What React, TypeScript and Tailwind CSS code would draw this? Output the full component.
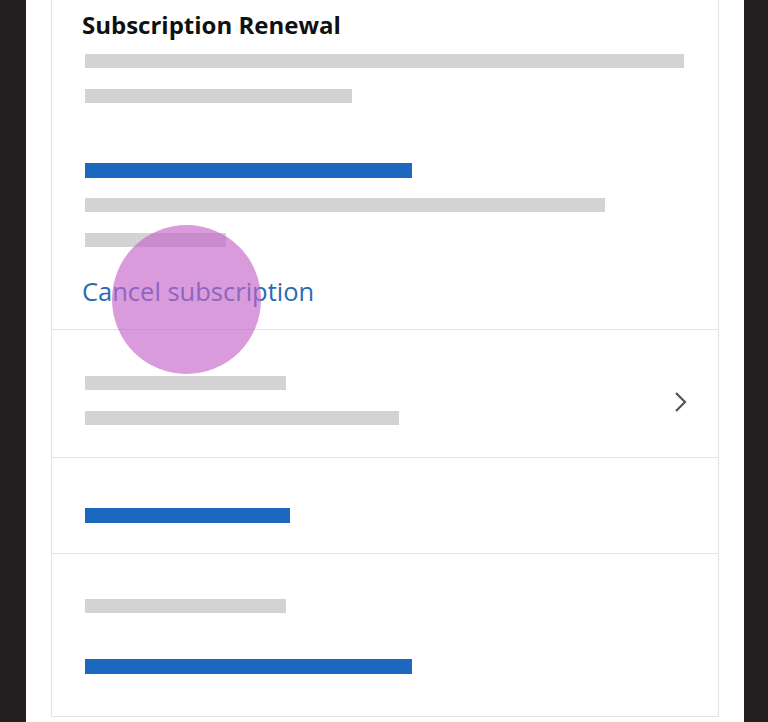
import React from 'react'

const Bar = ({ w, blue = false, className = '' }: { w: number; blue?: boolean; className?: string }) => (
  <div className={`${blue ? 'h-[15px] bg-[#1d68bf]' : 'h-[14px] bg-[#d3d3d3]'} ${className}`} style={{ width: w }} />
)

export default function App() {
  return (
    <div className="flex h-[722px] w-full overflow-hidden bg-white" style={{ fontFamily: '"Open Sans", "Liberation Sans", sans-serif' }}>
      <div className="w-[26px] shrink-0 bg-[#231f20]" />
      <main className="relative flex-1 px-[25px]">
        <div className="flex h-[717px] flex-col border-x border-b border-[#e3e3e3]">
          {/* renewal section */}
          <section className="flex h-[330px] flex-col border-b border-[#e3e3e3] pl-[33px] pt-[9px]">
            <h1 className="-ml-[3px] text-[24px] leading-[32px] font-bold text-[#0f1111]">Subscription Renewal</h1>
            <Bar w={599} className="mt-[13px]" />
            <Bar w={267} className="mt-[21px]" />
            <Bar w={327} blue className="mt-[60px]" />
            <Bar w={520} className="mt-[20px]" />
            <Bar w={141} className="mt-[21px]" />
            <a className="-ml-[3px] mt-[28px] text-[25.5px] leading-[32px] text-[#2a6bb3]">Cancel subscription</a>
          </section>

          <section className="flex h-[128px] items-center border-b border-[#e3e3e3] pl-[33px] pr-[30px]">
            <div className="flex flex-1 flex-col pt-[13px]">
              <Bar w={201} />
              <Bar w={314} className="mt-[21px]" />
            </div>
            <svg width="14" height="22" viewBox="0 0 14 22" className="mt-[16px]">
              <polyline points="2,2 11,11 2,20" fill="none" stroke="#555" strokeWidth="2.2" />
            </svg>
          </section>

          <section className="flex h-[96px] flex-col border-b border-[#e3e3e3] pl-[33px] pt-[50px]">
            <Bar w={205} blue />
          </section>

          <section className="flex flex-1 flex-col pl-[33px] pt-[45px]">
            <Bar w={201} />
            <Bar w={327} blue className="mt-[46px]" />
          </section>
        </div>

        {/* touch indicator */}
        <div className="pointer-events-none absolute left-[86px] top-[225px] h-[149px] w-[149px] rounded-full bg-[rgba(196,99,199,0.64)]" />
      </main>
      <div className="w-[24px] shrink-0 bg-[#231f20]" />
    </div>
  )
}
